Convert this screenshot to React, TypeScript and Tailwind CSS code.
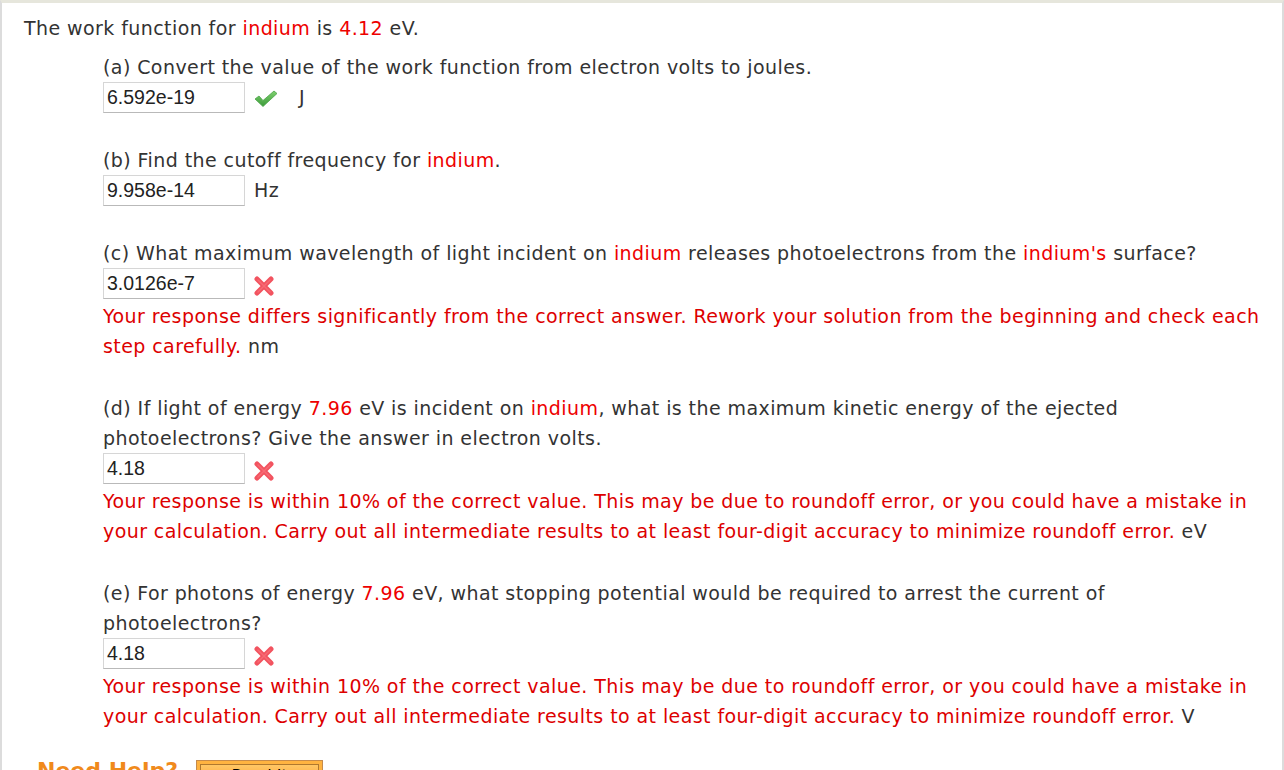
import React from "react";

const R = ({ children }: { children: React.ReactNode }) => (
  <span className="text-[#ee0000]">{children}</span>
);

const Check = () => (
  <svg width="26" height="20" viewBox="0 0 26 20" className="shrink-0">
    <defs>
      <linearGradient id="g" x1="0" y1="0" x2="0" y2="1">
        <stop offset="0" stopColor="#7fd16f" />
        <stop offset="1" stopColor="#3c9a3a" />
      </linearGradient>
    </defs>
    <path d="M2 11 L6 8 L10 12.5 L21 3 L24 5.5 L10 18.5 Z" fill="url(#g)" stroke="#4aa348" strokeWidth="0.8" strokeLinejoin="round" />
  </svg>
);

const Cross = () => (
  <svg width="22" height="22" viewBox="0 0 22 22" className="shrink-0">
    <path d="M4 4 L18 18 M18 4 L4 18" stroke="#f2535f" strokeWidth="5" strokeLinecap="round" />
    <path d="M5 5 L17 17 M17 5 L5 17" stroke="#fb7a83" strokeWidth="1.5" strokeLinecap="round" opacity="0.6" />
  </svg>
);

const Input = ({ value }: { value: string }) => (
  <div className="w-[142px] h-[31px] border border-[#d6d6d6] border-b-[#b9b9b9] bg-white px-[3px] flex items-center text-[19.5px] tracking-normal text-[#222] font-['Liberation_Sans',Arial,sans-serif] shrink-0">
    {value}
  </div>
);

const Err = ({ children, unit }: { children: React.ReactNode; unit: string }) => (
  <div className="leading-[30px] mt-[2px]">
    <span className="text-[#dd0000]">{children}</span> {unit}
  </div>
);

export default function App() {
  return (
    <div className="w-[1284px] h-[770px] overflow-hidden bg-white font-['DejaVu_Sans',Verdana,sans-serif] text-[19px] tracking-[0.42px] text-[#333] border-l-2 border-l-[#dcdcdc] border-r-2 border-r-[#dcdcdc] border-t-[3px] border-t-[#e6e6dc]">
      <div className="pl-[22px] pt-[10px] leading-[30px]">
        The work function for <R>indium</R> is <R>4.12</R> eV.
      </div>
      <div className="pl-[101px] pr-[10px] mt-[9px] flex flex-col gap-[32px]">
        <div>
          <div className="leading-[30px]">(a) Convert the value of the work function from electron volts to joules.</div>
          <div className="flex items-center h-[31px]">
            <Input value="6.592e-19" />
            <span className="ml-[8px]"><Check /></span>
            <span className="ml-[20px]">J</span>
          </div>
        </div>
        <div>
          <div className="leading-[30px]">(b) Find the cutoff frequency for <R>indium</R>.</div>
          <div className="flex items-center h-[31px]">
            <Input value="9.958e-14" />
            <span className="ml-[9px]">Hz</span>
          </div>
        </div>
        <div>
          <div className="leading-[30px]">(c) What maximum wavelength of light incident on <R>indium</R> releases photoelectrons from the <R>indium's</R> surface?</div>
          <div className="flex items-center h-[31px]">
            <Input value="3.0126e-7" />
            <span className="ml-[8px] mt-[4px]"><Cross /></span>
          </div>
          <Err unit="nm">Your response differs significantly from the correct answer. Rework your solution from the beginning and check each step carefully.</Err>
        </div>
        <div>
          <div className="leading-[30px] pr-[20px]">(d) If light of energy <R>7.96</R> eV is incident on <R>indium</R>, what is the maximum kinetic energy of the ejected photoelectrons? Give the answer in electron volts.</div>
          <div className="flex items-center h-[31px]">
            <Input value="4.18" />
            <span className="ml-[8px] mt-[4px]"><Cross /></span>
          </div>
          <Err unit="eV">Your response is within 10% of the correct value. This may be due to roundoff error, or you could have a mistake in your calculation. Carry out all intermediate results to at least four-digit accuracy to minimize roundoff error.</Err>
        </div>
        <div>
          <div className="leading-[30px] pr-[20px]">(e) For photons of energy <R>7.96</R> eV, what stopping potential would be required to arrest the current of photoelectrons?</div>
          <div className="flex items-center h-[31px]">
            <Input value="4.18" />
            <span className="ml-[8px] mt-[4px]"><Cross /></span>
          </div>
          <Err unit="V">Your response is within 10% of the correct value. This may be due to roundoff error, or you could have a mistake in your calculation. Carry out all intermediate results to at least four-digit accuracy to minimize roundoff error.</Err>
        </div>
      </div>
      <div className="flex items-start pl-[35px] mt-[25px] tracking-normal">
        <span className="text-[#f08a1c] font-bold text-[22px] leading-[30px]">Need Help?</span>
        <div className="ml-[18px] mt-[4px] w-[127px] h-[30px] border border-[#c68b4c] bg-[#ffb340] p-[3px]">
          <div className="h-full border border-[#b0782e] bg-gradient-to-b from-[#ffc766] to-[#ff9f1c] text-center text-[16px] text-black leading-[22px]">Read It</div>
        </div>
      </div>
    </div>
  );
}
